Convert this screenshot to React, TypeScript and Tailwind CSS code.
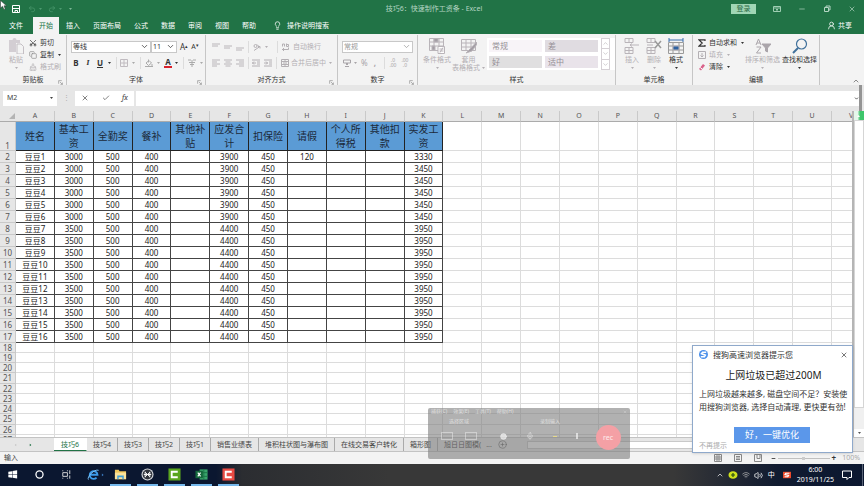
import type { ReactNode } from 'react';
import {
  BrushCleaning, Check, ChevronDown, ChevronUp, Circle, CirclePlus, Copy as CopyLine, Lightbulb, Mic, Minus,
  Redo2, Scissors, Undo2, UserRound, Volume2, Wifi, X,
} from 'lucide-react';

const TABS = ['文件', '开始', '插入', '页面布局', '公式', '数据', '审阅', '视图', '帮助'];
const COLS = 'ABCDEFGHIJKLMNOPQRSTUV'.split('');
const HEADERS = ['姓名', '基本工资', '全勤奖', '餐补', '其他补贴', '应发合计', '扣保险', '请假', '个人所得税', '其他扣款', '实发工资'];
const SHEETS = ['技巧6', '技巧4', '技巧3', '技巧2', '技巧1', '销售业绩表', '堆积柱状图与瀑布图', '在线交易客户转化', '箱形图'];

const STAFF = Array.from({ length: 16 }, (_, i) => {
  const base = i < 6 ? 3000 : 3500;
  const leave = i === 0 ? 120 : 0;
  return [`豆豆${i + 1}`, base, 500, 400, '', base + 900, 450, leave || '', '', '', base + 450 - leave];
});

const Caret = ({ className = '' }: { className?: string }) => (
  <svg viewBox="0 0 6 4" className={`h-[2px] w-[3px] shrink-0 ${className}`}><path d="M0 0h6L3 4z" fill="currentColor" /></svg>
);

const Sep = () => <span className="h-3 w-px shrink-0 bg-[#dcdcdc]" />;

function Group({ label, launcher, className, children }: { label: string; launcher?: boolean; className: string; children: ReactNode }) {
  return (
    <section aria-label={label} className={`relative flex flex-col border-r border-[#c6c6c6] ${className}`}>
      <div className="flex h-10 items-start">{children}</div>
      <div className="text-center leading-[10px] text-[#333]">{label}</div>
      {launcher && (
        <svg viewBox="0 0 8 8" className="absolute bottom-0 right-[3px] size-[5px] text-[#888]" fill="none" stroke="currentColor">
          <path d="M1 6V1h5M3 3l4 4M7 4v3H4" />
        </svg>
      )}
    </section>
  );
}

function BigButton({ icon, label, label2, dim, className = '' }: { icon: ReactNode; label: string; label2?: string; dim?: boolean; className?: string }) {
  return (
    <button className={`flex shrink-0 flex-col items-center whitespace-nowrap pt-[3px] leading-[8px] ${dim ? 'text-[#b4b0b4]' : 'text-[#333]'} ${className}`}>
      {icon}
      <span className="mt-[2px]">{label}</span>
      {label2
        ? <span className="flex items-center gap-[2px]">{label2}<Caret /></span>
        : <Caret className="mt-[3px]" />}
    </button>
  );
}

function SmallButton({ icon, label, caret, dim }: { icon: ReactNode; label: string; caret?: boolean; dim?: boolean }) {
  return (
    <button className={`flex h-3 items-center gap-[3px] whitespace-nowrap ${dim ? 'text-[#b4b0b4]' : 'text-[#333]'}`}>
      {icon}
      <span>{label}</span>
      {caret && <Caret className="ml-px" />}
    </button>
  );
}

function Lines({ widths, label, className = '' }: { widths: number[]; label: string; className?: string }) {
  return (
    <button aria-label={label} className={`text-[#b9b5b9] ${className}`}>
      <svg viewBox="0 0 8 8" className="size-2" stroke="currentColor">
        {widths.map((w, i) => <path key={i} d={`M${label === '右对齐' ? 8 - w : label === '居中' ? (8 - w) / 2 : 0} ${i * 2 + 1}h${w}`} />)}
      </svg>
    </button>
  );
}

function Combo({ label, value, className, dim }: { label: string; value: string; className: string; dim?: boolean }) {
  return (
    <label className={`relative block h-3 border border-[#c8c8c8] bg-white ${className} ${dim ? 'text-[#999]' : 'text-[#333]'}`}>
      <select aria-label={label} className="block h-full w-full appearance-none px-px leading-[10px] outline-none">
        <option>{value}</option>
      </select>
      <ChevronDown className="pointer-events-none absolute right-px top-0 size-[9px]" strokeWidth={2} />
    </label>
  );
}

const TableIcon = ({ children }: { children?: ReactNode }) => (
  <svg viewBox="0 0 16 16" className="size-4" fill="none" stroke="#b9b4b9">
    {children}
  </svg>
);

function TitleBar() {
  return (
    <header className="bg-[#217346] text-white">
      <div className="flex h-[17px] items-center">
        <div className="flex flex-1 items-center pl-3">
          <button aria-label="保存">
            <svg viewBox="0 0 8 8" className="size-2" fill="none" stroke="currentColor">
              <path d="M.5.5h7v7h-7zM.5 3.500h7M3 7.500V5.500h2.500v2" />
            </svg>
          </button>
          <button aria-label="撤消" className="ml-2 text-[#4d9a70]"><Undo2 className="size-2" /></button>
          <Caret className="ml-[3px] text-[#4d9a70]" />
          <button aria-label="恢复" className="ml-[6px] text-[#4d9a70]"><Redo2 className="size-2" /></button>
          <Caret className="ml-[3px] text-[#4d9a70]" />
          <Caret className="ml-[7px] text-[#7db696]" />
        </div>
        <h1 className="text-[#b5d6c4]">技巧6：快速制作工资条 - Excel</h1>
        <div className="flex flex-1 items-center justify-end gap-[17px] pr-2">
          <button className="h-[10px] w-[25px] bg-[#a0d6b5] leading-[10px] text-[#2d6b48]">登录</button>
          <button aria-label="功能区显示选项" className="text-[#9fceb3]">
            <svg viewBox="0 0 8 8" className="size-2" fill="none" stroke="currentColor"><path d="M.5 1.500h7v5h-7zM.5 3h7M4 6V4M3 5l1-1 1 1" /></svg>
          </button>
          <button aria-label="最小化" className="text-[#b5d6c4]"><Minus className="size-2" /></button>
          <button aria-label="还原" className="text-[#b5d6c4]">
            <svg viewBox="0 0 8 8" className="size-2" fill="none" stroke="currentColor"><path d="M1.500 2.500h4v4h-4zM3 2.500v-1.500h4v4H5.500" /></svg>
          </button>
          <button aria-label="关闭" className="text-[#b5d6c4]"><X className="size-2" /></button>
        </div>
      </div>
      <nav className="flex h-[17px] items-stretch gap-px pl-[3px]">
        {TABS.map((t) => (
          <button key={t} className={`px-[6px] ${t === '开始' ? 'ml-px bg-[#f3f3f3] text-[#217346]' : ''} ${t === '文件' ? 'mr-[2px]' : ''}`}>{t}</button>
        ))}
        <button className="ml-[10px] flex items-center gap-[5px]"><Lightbulb className="size-[9px]" />操作说明搜索</button>
        <button className="ml-auto mr-3 flex items-center gap-[2px]"><UserRound className="size-[9px]" />共享</button>
      </nav>
    </header>
  );
}

function Ribbon() {
  return (
    <div className="flex h-[51px] bg-[#f3f3f3] pt-px">
      <Group label="剪贴板" launcher className="w-[67px] shrink-0">
        <BigButton dim className="pl-2" label="粘贴" icon={
          <svg viewBox="0 0 16 16" className="size-4" fill="#d3ced3">
            <path d="M1 2h3.500a2 2 0 014 0H12v3H8v9H1z" /><path d="M9 6h4l2.500 2.500V16H9z" fill="#f3f3f3" stroke="#c4bfc4" />
          </svg>
        } />
        <div className="flex flex-col pl-[5px] pt-[2px]">
          <SmallButton icon={<Scissors className="size-2 -rotate-90" />} label="剪切" />
          <SmallButton icon={<CopyLine className="size-2 text-[#888]" />} label="复制" caret />
          <SmallButton dim icon={<BrushCleaning className="size-2" />} label="格式刷" />
        </div>
      </Group>

      <Group label="字体" launcher className="w-[139px] shrink-0">
        <div className="flex flex-col gap-1 pl-1 pt-[6px]">
          <div className="flex items-center">
            <Combo label="字体" value="等线" className="w-20" />
            <Combo label="字号" value="11" className="w-[26px]" />
            <button aria-label="增大字号" className="ml-[3px] font-['Noto_Sans'] text-[8px] leading-3 text-[#333]">A<sup className="text-[5px]">▴</sup></button>
            <button aria-label="减小字号" className="ml-[3px] font-['Noto_Sans'] text-[7px] leading-3 text-[#333]">A<sup className="text-[5px]">▾</sup></button>
          </div>
          <div className="flex h-3 items-center text-[8px] text-[#333]">
            <button className="ml-px w-2 font-bold">B</button>
            <button className="ml-1 w-2 font-serif font-bold italic">I</button>
            <button className="ml-1 w-2 font-bold underline">U</button>
            <Caret className="ml-1 mr-[5px]" />
            <Sep />
            <button aria-label="边框" className="ml-[3px] text-[#c0bbc0]">
              <svg viewBox="0 0 8 8" className="size-2" fill="none" stroke="currentColor"><path d="M.5.5h7v7h-7zM4 0v8M0 4h8" /></svg>
            </button>
            <Caret className="ml-1 mr-[5px] text-[#aaa]" />
            <Sep />
            <button aria-label="填充颜色" className="ml-1 text-[#aaa]">
              <svg viewBox="0 0 8 8" className="size-2" fill="none" stroke="currentColor"><path d="M3.500.5v3M1 4l3-2.500L6.500 4l-3 2.500zM7 5v2M0 7.500h8" /></svg>
            </button>
            <Caret className="ml-1 text-[#aaa]" />
            <button aria-label="字体颜色" className="ml-1 h-[10px] w-2 border-b-2 border-[#d8202a] font-bold leading-[8px]">A</button>
            <Caret className="ml-[3px] mr-[5px]" />
            <Sep />
            <button aria-label="拼音" className="ml-1 text-[#aaa]">
              <svg viewBox="0 0 8 8" className="size-2" fill="none" stroke="currentColor"><path d="M0 1h3M5 1h3M1 3.500h6M4 1v7M2 5.500h4" /></svg>
            </button>
            <Caret className="ml-1 text-[#aaa]" />
          </div>
        </div>
      </Group>

      <Group label="对齐方式" launcher className="w-[132px] shrink-0">
        <div className="flex flex-col gap-1 pl-[6px] pt-[6px] text-[#b4b0b4]">
          <div className="flex h-3 items-center">
            <Lines label="顶端对齐" widths={[8, 6]} />
            <Lines label="垂直居中" widths={[0, 8, 6]} className="ml-1" />
            <Lines label="底端对齐" widths={[0, 0, 8, 6]} className="ml-1 mr-1" />
            <Sep />
            <button aria-label="方向" className="ml-1">
              <svg viewBox="0 0 8 8" className="size-2" fill="none" stroke="currentColor"><circle cx="2.500" cy="3" r="1.500" /><path d="M4 1.500l2 2M1 7.500l6-4M5 3.500h2v2" /></svg>
            </button>
            <Caret className="ml-1 mr-[9px]" />
            <Sep />
            <button className="ml-1 flex items-center gap-[3px]">
              <svg viewBox="0 0 8 8" className="size-2" fill="none" stroke="currentColor"><path d="M.5 3.500V1h2v2.500M4.500.5v3h2v-2h-2M0 6.500h6.500v-2M2 5L.5 6.500 2 8" /></svg>
              自动换行
            </button>
          </div>
          <div className="flex h-3 items-center">
            <Lines label="左对齐" widths={[8, 5, 8, 5]} />
            <Lines label="居中" widths={[8, 5, 8, 5]} className="ml-1" />
            <Lines label="右对齐" widths={[8, 5, 8, 5]} className="ml-1 mr-1" />
            <Sep />
            <button aria-label="减少缩进" className="ml-[3px]">
              <svg viewBox="0 0 8 8" className="size-2" fill="none" stroke="currentColor"><path d="M0 1h8M5 3h3M5 5h3M0 7h8M4 4H0M2 2.500L.5 4 2 5.500" /></svg>
            </button>
            <button aria-label="增加缩进" className="ml-1">
              <svg viewBox="0 0 8 8" className="size-2" fill="none" stroke="currentColor"><path d="M0 1h8M5 3h3M5 5h3M0 7h8M0 4h4M2 2.500L3.500 4 2 5.500" /></svg>
            </button>
            <span className="w-1" />
            <Sep />
            <button className="ml-1 flex items-center gap-[2px]">
              <svg viewBox="0 0 8 8" className="size-2" fill="none" stroke="currentColor"><path d="M.5.5h7v7h-7zM0 2.500h8M0 5.500h8M4 0v2.500M4 5.500V8M2 4h4" /></svg>
              合并后居中
            </button>
            <Caret className="ml-[3px]" />
          </div>
        </div>
      </Group>

      <Group label="数字" launcher className="w-20 shrink-0">
        <div className="flex w-full flex-col gap-1 px-1 pt-[6px]">
          <Combo dim label="数字格式" value="常规" className="w-full" />
          <div className="flex h-3 items-center text-[#a8a4a8]">
            <button aria-label="会计数字格式" className="ml-px">
              <svg viewBox="0 0 8 8" className="size-2" fill="none" stroke="currentColor"><path d="M.5 1h7v3h-7zM3 4l2 2M5 4L3 6M2 7.500h4" /></svg>
            </button>
            <Caret className="ml-[3px]" />
            <button className="ml-1 text-[8px]">%</button>
            <button className="ml-[6px] text-[8px] font-bold">,</button>
            <span className="w-2" />
            <Sep />
            <button className="ml-1 w-2 text-[5px] leading-[5px]">.0 .00</button>
            <button className="ml-1 w-2 text-[5px] leading-[5px]">.00 .0</button>
          </div>
        </div>
      </Group>

      <Group label="样式" className="min-w-0 flex-1">
        <BigButton dim className="ml-[5px]" label="条件格式" icon={
          <TableIcon>
            <path d="M.5.5h14v12H.5zM.5 4h14M.5 8h14M5 .5v12M10 .5v12" />
            <path d="M5 .5h4V4H5zM3 8h3v4H3z" fill="#a39ea5" /><path d="M9 8.500h6.500v7H9z" fill="#fff" /><path d="M10.500 11h4M10.500 13h4M14 9.500l-3 5" />
          </TableIcon>
        } />
        <BigButton dim className="ml-px" label="套用" label2="表格格式" icon={
          <TableIcon>
            <path d="M.5 1.500h14v11H.5zM.5 5h14M.5 9h14M5 1.500v11M10 1.500v11" />
            <path d="M15.500 4L9 11l-4 4 6-2 5-7z" fill="#a39ea5" />
          </TableIcon>
        } />
        <div className="ml-[2px] mt-[3px] flex min-w-0 flex-1 gap-px bg-white pr-[5px] text-[8px] leading-3 text-[#948f96]">
          <div className="grid flex-1 grid-cols-2 gap-x-[3px] gap-y-[4px] p-[2px] text-left">
            <button className="bg-[#f8f4f8] px-[3px] text-left">常规</button>
            <button className="bg-[#e0dce1] px-[3px] text-left">差</button>
            <button className="bg-[#e0dfe0] px-[3px] text-left">好</button>
            <button className="bg-[#e9e3ea] px-[3px] text-left">适中</button>
          </div>
          <div className="flex w-[9px] flex-col divide-y divide-[#d5d0d5] border border-[#d5d0d5] text-[#b4b0b4]">
            <button aria-label="上一行" className="flex-1"><ChevronUp className="size-[7px]" /></button>
            <button aria-label="下一行" className="flex-1"><ChevronDown className="size-[7px]" /></button>
            <button aria-label="其他" className="flex-1"><ChevronDown className="size-[7px]" /></button>
          </div>
        </div>
      </Group>

      <Group label="单元格" className="w-[77px] shrink-0">
        <BigButton dim className="ml-2 w-4" label="插入" icon={
          <TableIcon><path d="M1 .5h8v4H1zM5 .5v4M1 9.500h8v6H1zM5 9.500v6M1 12.500h8M6 7h9M8 5.500L6 7l2 1.500" /></TableIcon>
        } />
        <BigButton dim className="ml-[6px] w-4" label="删除" icon={
          <TableIcon><path d="M1 .5h8v4H1zM5 .5v4M1 9.500h8v6H1zM5 9.500v6M1 12.500h8M1 7h6" /><path d="M9 3l6 7M15 3l-6 7" stroke="#999" strokeWidth="1.500" /></TableIcon>
        } />
        <BigButton className="ml-[6px] w-4" label="格式" icon={
          <TableIcon>
            <path d="M.5 4.500h15v11H.5zM.5 8h15M.5 12h15M5 4.500v11M11 4.500v11" stroke="#9a9a9a" />
            <path d="M5 8h6v4H5z" fill="#2f62a0" /><path d="M1 2h14M1 0v4M15 0v4" stroke="#3b6fae" />
          </TableIcon>
        } />
      </Group>

      <Group label="编辑" className="w-[127px] shrink-0">
        <div className="flex w-[49px] flex-col pl-[5px] pt-[2px]">
          <SmallButton caret label="自动求和" icon={
            <svg viewBox="0 0 8 8" className="size-2 shrink-0" fill="none" stroke="#333" strokeWidth="1.200"><path d="M7 2V.8H1L4.200 4 1 7.200h6V6" /></svg>
          } />
          <SmallButton dim caret label="填充" icon={
            <svg viewBox="0 0 8 8" className="size-2" fill="none" stroke="currentColor"><path d="M.5.5h7v7h-7zM4 2v4M2.500 4.500L4 6l1.500-1.500" /></svg>
          } />
          <SmallButton caret label="清除" icon={
            <svg viewBox="0 0 8 8" className="size-2"><path d="M1 6l4-5 2 1.500-4 5z" fill="#d9628a" /><path d="M2.200 4.500l2 1.600" stroke="#fff" /></svg>
          } />
        </div>
        <BigButton dim className="ml-[3px]" label="排序和筛选" icon={
          <svg viewBox="0 0 16 16" className="size-4" fill="none" stroke="#aaa5aa">
            <path d="M1 7l2.500-6L6 7M2 5h3M1.500 9H6l-4.500 6H6" /><path d="M7 6h9l-3.500 4v4l-2-1v-3z" fill="#aaa5aa" />
          </svg>
        } />
        <BigButton className="ml-[2px]" label="查找和选择" icon={
          <svg viewBox="0 0 16 16" className="size-4" fill="none" stroke="#41719c"><circle cx="9.500" cy="6" r="5" strokeWidth="1.200" /><path d="M6 10l-5 5" strokeWidth="2" /></svg>
        } />
      </Group>

      <div className="flex w-11 shrink-0 items-end justify-end pr-1 text-[#555]">
        <button aria-label="折叠功能区"><ChevronUp className="size-2" /></button>
      </div>
    </div>
  );
}

function FormulaBar() {
  return (
    <div className="flex h-[26px] items-center bg-[#e6e6e6] pl-[3px] text-[#444]">
      <div className="flex h-[15px] w-[54px] items-center bg-white pr-1">
        <input aria-label="名称框" defaultValue="M2" className="w-full min-w-0 pl-1 outline-none" />
        <Caret />
      </div>
      <span className="w-[18px] text-center text-[#aaa]">⋮</span>
      <div className="flex h-[15px] w-[59px] items-center justify-around bg-white">
        <button aria-label="取消"><X className="size-2" /></button>
        <button aria-label="输入"><Check className="size-2" /></button>
        <button aria-label="插入函数" className="font-serif text-[8px] italic">fx</button>
      </div>
      <input aria-label="编辑栏" className="ml-[2px] h-[15px] min-w-0 flex-1 bg-white outline-none" />
      <div className="flex h-[15px] w-[5px] items-center bg-white"><ChevronDown className="size-[5px]" strokeWidth={4} /></div>
      <span className="h-full w-[3px] bg-[#949494]" />
      <span className="w-[2px]" />
    </div>
  );
}

function Sheet() {
  const rowHead = 'overflow-hidden border-r border-b border-[#c9c9c9] bg-[#e6e6e6] p-0 align-bottom font-normal text-[#555]';
  return (
    <div className="flex min-h-0 flex-1">
      <div className="min-w-0 flex-1 overflow-hidden border-r border-[#b5b5b5] bg-white">
        <table className="w-[871px] table-fixed border-separate border-spacing-0 text-center text-[8px]">
          <colgroup>
            <col className="w-4" />
            {COLS.map((c) => <col key={c} />)}
          </colgroup>
          <thead>
            <tr className="h-[11px] bg-[#e6e6e6] text-[7px] leading-[10px] text-[#555]">
              <th className="border-b border-[#ababab] p-0"><svg viewBox="0 0 6 6" className="ml-auto mr-px size-[6px]"><path d="M6 0v6H0z" fill="#b4b4b4" /></svg></th>
              {COLS.map((c) => <th key={c} scope="col" className="border-r border-b border-r-[#c9c9c9] border-b-[#ababab] p-0 font-normal">{c}</th>)}
            </tr>
          </thead>
          <tbody>
            <tr className="h-[29px]">
              <th scope="row" className={`${rowHead} leading-[9px]`}>1</th>
              {COLS.map((c, i) => HEADERS[i]
                ? <td key={c} className="border-r border-b border-[#222] bg-[#5b9bd5] p-0 px-[3px] text-[10px] leading-[14px] text-[#1b2a3a]">{HEADERS[i]}</td>
                : <td key={c} className="border-r border-b border-[#dcdcdc] p-0" />)}
            </tr>
            {STAFF.map((row, r) => (
              <tr key={r} className="h-3 leading-[11px]">
                <th scope="row" className={rowHead}>{r + 2}</th>
                {COLS.map((c, i) => (
                  <td key={c} className={`border-r border-b p-0 ${i < 11 ? 'border-[#444] text-[#222]' : 'border-[#dcdcdc]'}`}>{row[i]}</td>
                ))}
              </tr>
            ))}
            {Array.from({ length: 10 }, (_, r) => (
              <tr key={r} className={r % 4 === 3 ? 'h-[11px] leading-[10px]' : 'h-[10px] leading-[9px]'}>
                <th scope="row" className={rowHead}>{r + 18}</th>
                {COLS.map((c) => <td key={c} className="border-r border-b border-[#dcdcdc] p-0" />)}
              </tr>
            ))}
          </tbody>
        </table>
      </div>
      <div className="flex w-[11px] flex-col justify-between border-l border-[#b5b5b5] bg-[#f0f0f0]">
        <div className="flex flex-col bg-white">
          <button aria-label="向上滚动" className="flex h-[9px] items-center justify-end bg-[linear-gradient(90deg,#e4f7ea_35%,#3ec56b_60%)] pr-1 text-white"><Caret className="rotate-180" /></button>
          <div className="h-72 border border-[#d5d5d5] bg-white" />
        </div>
        <button aria-label="向下滚动" className="flex h-[8px] items-center justify-center bg-white text-[#555]"><Caret /></button>
      </div>
    </div>
  );
}

function SheetTabs() {
  return (
    <div className="flex h-[15px] items-center border-y border-[#c3c3c3] bg-[#e6e6e6] text-[#444]">
      <div className="flex w-[54px] items-center gap-3 pl-[14px]">
        <button aria-label="上一张"><Caret className="rotate-90 text-[#c6c6c6]" /></button>
        <button aria-label="下一张"><Caret className="-rotate-90 text-[#217346]" /></button>
      </div>
      {SHEETS.map((s, i) => (
        <button key={s} className={`h-[13px] whitespace-nowrap border-r leading-[13px] ${i === 0 ? 'border-r-transparent border-b border-b-[#217346] bg-white px-[7px] text-[#217346]' : 'border-r-[#aaa] px-[6px]'}`}>{s}</button>
      ))}
      <button className="whitespace-nowrap pl-[6px] text-[#333]">旭日日图模(</button>
      <button aria-label="更多工作表" className="pl-[5px]">...</button>
      <button aria-label="新工作表" className="pl-[6px]"><CirclePlus className="size-[9px]" strokeWidth={1.500} /></button>
      <div className="ml-5 mr-3 h-2 flex-1 border border-[#c9c9c9] bg-white" />
    </div>
  );
}

function StatusBar() {
  return (
    <div className="flex h-3 items-center bg-[#f3f3f3] px-1 text-[#444]">
      <span>输入</span>
      <div className="ml-auto flex items-center text-[#888]">
        <svg viewBox="0 0 8 8" className="size-2" fill="none" stroke="currentColor"><path d="M.5.5h7v7h-7zM.5 3h7M.5 5h7M3 .5v7M5 .5v7" /></svg>
        <svg viewBox="0 0 8 8" className="ml-3 size-2" fill="none" stroke="currentColor"><path d="M.5.5h7v7h-7zM2 2.500h4M2 4h4M2 5.500h4" /></svg>
        <svg viewBox="0 0 8 8" className="ml-3 size-2" fill="none" stroke="currentColor"><path d="M.5.5h7v7h-7zM3 .5v4h3v-4" /></svg>
        <button aria-label="缩小" className="ml-[9px] text-[#333]"><Minus className="size-[5px]" strokeWidth={4} /></button>
        <input type="range" aria-label="显示比例" className="mx-[2px] h-px w-[52px] appearance-none bg-[#c0c0c0] [&::-webkit-slider-thumb]:size-[3px] [&::-webkit-slider-thumb]:appearance-none [&::-webkit-slider-thumb]:bg-[#ccc]" />
        <button aria-label="放大" className="text-[8px] font-bold leading-[8px] text-[#333]">+</button>
        <span className="ml-[6px] text-[#aaa]">100%</span>
      </div>
    </div>
  );
}

function TaskIcon({ label, open, children }: { label: string; open?: boolean; children: ReactNode }) {
  return (
    <button aria-label={label} className={`flex h-full w-[21px] items-center justify-center border-b-2 ${open ? 'border-[#76b9ed]' : 'border-transparent'}`}>
      <svg viewBox="0 0 14 14" className="size-[13px] overflow-visible" fill="none">{children}</svg>
    </button>
  );
}

function Taskbar() {
  return (
    <footer className="flex h-[22px] items-center bg-[linear-gradient(90deg,#0b1730_0%,#0b1730_25%,#2b2d31_28%,#383838_45%,#383838_78%,#111b30_90%,#0b1730_100%)] text-white">
      <div className="flex h-full gap-[6px] pl-[2px]">
        <TaskIcon label="开始"><path d="M2.500 4l4-.6v3.300h-4zM7 3.300l5-.8v4.200H7zM2.500 7.200h4v3.300l-4-.6zM7 7.200h5v4.200l-5-.8z" fill="#fff" /></TaskIcon>
        <TaskIcon label="Cortana"><circle cx="7" cy="7" r="3.800" stroke="#fff" strokeWidth="1.400" /></TaskIcon>
        <TaskIcon label="任务视图"><path d="M3 5h5v4H3zM3 3.500V2.500M8 3.500V2.500M3 11.500v-1M8 11.500v-1M10.500 2.500v4M10.500 8v3.500" stroke="#ddd" /></TaskIcon>
        <TaskIcon label="Internet Explorer">
          <path d="M4 7.300h7.300a4.200 4.200 0 10-1 3" stroke="#3c9bea" strokeWidth="2" />
          <path d="M1.500 12.500C-.5 10 8 .5 12.500 2.500" stroke="#7cc4f7" />
          <path d="M16 6v3l2-1.500z" fill="#3c7bc0" />
        </TaskIcon>
        <TaskIcon label="文件资源管理器" open>
          <path d="M1 2h4l1 1.500h7V12H1z" fill="#f0c65a" /><path d="M1 5h12v7H1z" fill="#fbe29a" /><path d="M3.500 8h7v4H9v-2H5v2H3.500z" fill="#3f9fd8" />
        </TaskIcon>
        <TaskIcon label="录屏" open>
          <circle cx="7" cy="7" r="6.500" fill="#d8dade" /><circle cx="7" cy="7" r="5.300" fill="#30343c" /><path d="M4.500 4v6M9.500 4v6M4.500 4.500l5 5M9.500 4.500l-5 5M3 7h8" stroke="#fff" />
        </TaskIcon>
        <TaskIcon label="Camtasia" open><path d="M.5.5h13v13H.5z" fill="#5aa51e" /><path d="M10.500 4H4v6h6.500" stroke="#fff" strokeWidth="2" /></TaskIcon>
        <TaskIcon label="Excel" open>
          <path d="M5 1.500h8.500v11H5z" fill="#39a56b" /><path d="M9.500 1.500v11M5 5h8.500M5 9h8.500" stroke="#1b7446" /><path d="M.5 3h8v8h-8z" fill="#15683c" /><path d="M3 5l3 4M6 5L3 9" stroke="#fff" strokeWidth="1.200" />
        </TaskIcon>
        <TaskIcon label="Camtasia Recorder" open><path d="M.5.5h13v13H.5z" fill="#e84a43" /><path d="M10.500 4H4v6h6.500" stroke="#fff" strokeWidth="2" /></TaskIcon>
      </div>
      <div className="ml-auto flex h-full items-center">
        <ChevronUp className="size-2" />
        <svg viewBox="0 0 10 10" className="ml-1 size-[10px]"><ellipse cx="5" cy="5" rx="4.500" ry="3.800" fill="#cfe01c" /><path d="M5 3v4M3 5h4" stroke="#264a10" strokeWidth="1.200" /></svg>
        <Wifi className="ml-1 size-2 text-[#bbb]" />
        <Volume2 className="ml-1 size-[9px]" />
        <span className="ml-[5px]">中</span>
        <svg viewBox="0 0 10 10" className="ml-2 size-2"><path d="M0 1h10v8H0z" fill="#ec4a2b" /><path d="M8 2.800H3.500L2.500 4.500 7 5.500 6 7.200H2" fill="none" stroke="#fff" strokeWidth="1.500" /></svg>
        <div className="ml-[6px] text-center leading-[10px]">
          <div>6:00</div>
          <div>2019/11/25</div>
        </div>
        <button aria-label="通知" className="ml-2">
          <svg viewBox="0 0 10 10" className="size-[10px]" fill="none" stroke="currentColor"><path d="M.5 1h9v6.500H7L5 9.500V7.500H.5z" /></svg>
        </button>
        <span className="ml-[10px] mr-px h-full w-px bg-[#5a6478]" />
      </div>
    </footer>
  );
}

function RecorderGhost() {
  return (
    <div className="absolute bottom-[27px] left-[428px] flex h-[51px] w-[202px] flex-col rounded-[2px] bg-[#7d7d7d]/60 text-white/60">
      <div className="flex h-[7px] items-center gap-[6px] px-[3px] text-[5px] leading-[7px]">
        <span>捕获(C)</span><span>效果(E)</span><span>工具(T)</span><span>帮助(H)</span>
        <X className="ml-auto size-1" />
      </div>
      <div className="flex flex-1">
        <div className="flex w-[62px] flex-col items-center gap-2 pt-[3px] text-[5px] leading-[6px]">
          <span>选择区域</span>
          <div className="flex gap-3"><span className="h-2 w-3 border border-white/40" /><span className="h-2 w-3 border border-white/40" /></div>
        </div>
        <div className="flex flex-1 flex-col items-center gap-2 pt-[3px] text-[5px] leading-[6px]">
          <span className="ml-6">录制输入</span>
          <div className="flex w-full items-center gap-[19px] pl-[10px]">
            <Circle className="size-[7px] fill-white/60" />
            <Mic className="size-2" />
            <span className="h-px w-1 bg-[#e6d98a]" />
            <span className="h-[6px] w-[2px] bg-white/60" />
          </div>
        </div>
        <div className="flex w-11 items-center justify-center">
          <button className="size-[25px] rounded-full bg-[#f4a0a5] text-[7px] leading-[25px] text-white/80">rec</button>
        </div>
      </div>
    </div>
  );
}

function BrowserPopup() {
  return (
    <aside className="absolute bottom-[33px] right-[11px] w-[161px] border border-[#8fa9cb] bg-white pl-[6px] pr-1 text-[#333] shadow-sm">
      <div className="flex h-[17px] items-center text-[8px]">
        <svg viewBox="0 0 10 10" className="size-[9px]"><circle cx="5" cy="5" r="5" fill="#4a8fea" /><path d="M8 2.500H4L2.800 4 7 5.800 6 7.500H2" fill="none" stroke="#fff" strokeWidth="1.800" /></svg>
        <span className="ml-[5px]">搜狗高速浏览器提示您</span>
        <button aria-label="关闭提示" className="ml-auto"><X className="size-2" /></button>
      </div>
      <h2 className="mt-[5px] text-center text-[10px] leading-[14px] text-[#222]">上网垃圾已超过200M</h2>
      <p className="mt-[5px] whitespace-nowrap text-[8px] leading-[13px]">上网垃圾越来越多, 磁盘空间不足？安装使<br />用搜狗浏览器, 选择自动清理, 更快更有劲!</p>
      <button className="ml-[35px] mt-[14px] block h-4 w-[76px] bg-[#5b97ea] text-[9px] leading-4 text-white">好，一键优化</button>
      <a href="#dismiss" className="mb-[3px] block leading-[6px] text-[#aaa]">不再提示</a>
    </aside>
  );
}

export default function App() {
  return (
    <div className="relative flex h-screen cursor-default flex-col overflow-hidden bg-[#e6e6e6] font-['Noto_Sans','Noto_Sans_CJK_SC',sans-serif] text-[7px] leading-[10px]">
      <TitleBar />
      <Ribbon />
      <FormulaBar />
      <Sheet />
      <SheetTabs />
      <StatusBar />
      <Taskbar />
      <RecorderGhost />
      <BrowserPopup />
      <svg viewBox="0 0 7 10" className="pointer-events-none absolute left-0 top-0 h-[10px] w-[7px]">
        <path d="M.5.5v7.500l2-1.800L4 9.500l1.200-.6L4 5.800h2.500z" fill="#fff" stroke="#333" strokeWidth=".5" />
      </svg>
    </div>
  );
}
